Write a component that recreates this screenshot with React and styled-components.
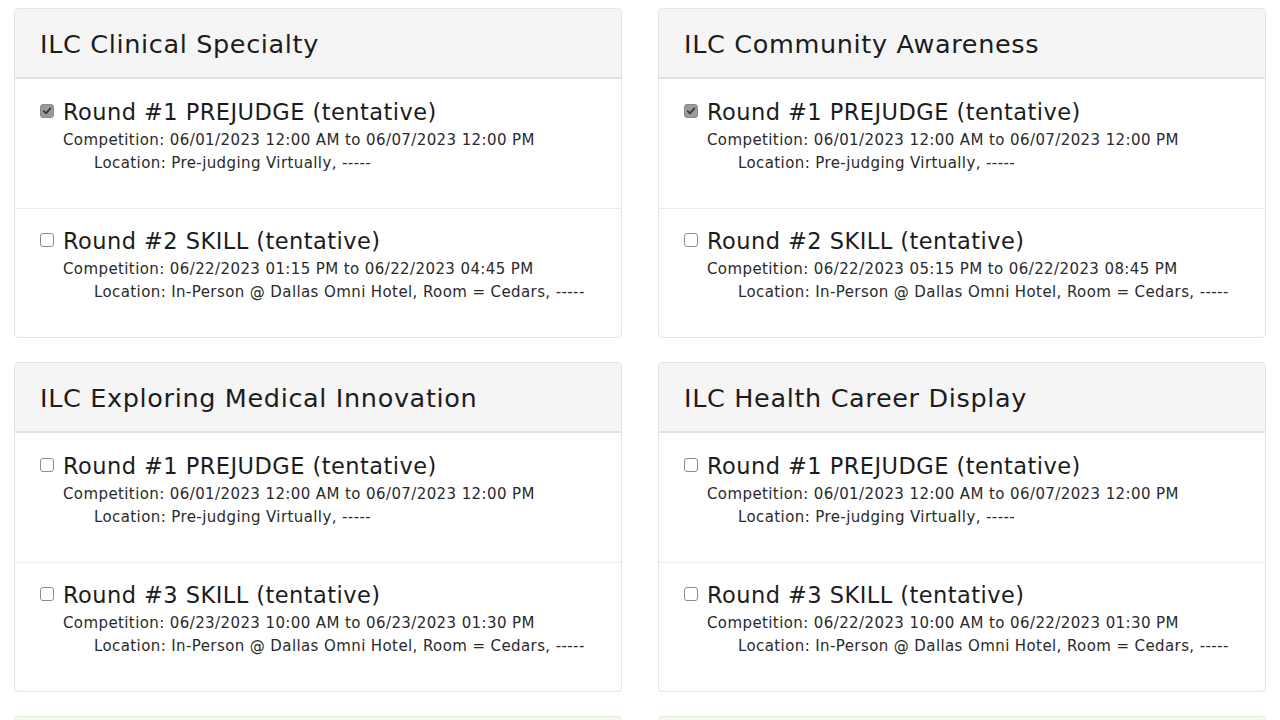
import React from "react";
import styled, { createGlobalStyle } from "styled-components";

const GlobalStyle = createGlobalStyle`
  html, body {
    margin: 0;
    padding: 0;
    background: #fff;
    overflow: hidden;
  }
  body {
    font-family: "DejaVu Sans", Verdana, sans-serif;
    color: #222;
  }
`;

const events = [
  {
    title: "ILC Clinical Specialty",
    rounds: [
      {
        name: "Round #1 PREJUDGE (tentative)",
        checked: true,
        competition: "06/01/2023 12:00 AM to 06/07/2023 12:00 PM",
        location: "Pre-judging Virtually, -----",
      },
      {
        name: "Round #2 SKILL (tentative)",
        competition: "06/22/2023 01:15 PM to 06/22/2023 04:45 PM",
        location: "In-Person @ Dallas Omni Hotel, Room = Cedars, -----",
      },
    ],
  },
  {
    title: "ILC Community Awareness",
    rounds: [
      {
        name: "Round #1 PREJUDGE (tentative)",
        checked: true,
        competition: "06/01/2023 12:00 AM to 06/07/2023 12:00 PM",
        location: "Pre-judging Virtually, -----",
      },
      {
        name: "Round #2 SKILL (tentative)",
        competition: "06/22/2023 05:15 PM to 06/22/2023 08:45 PM",
        location: "In-Person @ Dallas Omni Hotel, Room = Cedars, -----",
      },
    ],
  },
  {
    title: "ILC Exploring Medical Innovation",
    rounds: [
      {
        name: "Round #1 PREJUDGE (tentative)",
        competition: "06/01/2023 12:00 AM to 06/07/2023 12:00 PM",
        location: "Pre-judging Virtually, -----",
      },
      {
        name: "Round #3 SKILL (tentative)",
        competition: "06/23/2023 10:00 AM to 06/23/2023 01:30 PM",
        location: "In-Person @ Dallas Omni Hotel, Room = Cedars, -----",
      },
    ],
  },
  {
    title: "ILC Health Career Display",
    rounds: [
      {
        name: "Round #1 PREJUDGE (tentative)",
        competition: "06/01/2023 12:00 AM to 06/07/2023 12:00 PM",
        location: "Pre-judging Virtually, -----",
      },
      {
        name: "Round #3 SKILL (tentative)",
        competition: "06/22/2023 10:00 AM to 06/22/2023 01:30 PM",
        location: "In-Person @ Dallas Omni Hotel, Room = Cedars, -----",
      },
    ],
  },
];

function CheckBox({ checked }) {
  return (
    <Box $checked={checked}>
      {checked && (
        <svg width="10" height="10" viewBox="0 0 10 10">
          <path
            d="M1.8 5.2 L4 7.4 L8.3 2.4"
            fill="none"
            stroke="#3a3a3a"
            strokeWidth="1.8"
            strokeLinecap="round"
            strokeLinejoin="round"
          />
        </svg>
      )}
    </Box>
  );
}

function EventPanel({ event }) {
  return (
    <Panel>
      <PanelHeader>
        <PanelTitle>{event.title}</PanelTitle>
      </PanelHeader>
      {event.rounds.map((r) => (
        <RoundRow key={r.name}>
          <RoundTitle>
            <CheckBox checked={r.checked} />
            {r.name}
          </RoundTitle>
          <Detail>Competition: {r.competition}</Detail>
          <Detail $indent>Location: {r.location}</Detail>
        </RoundRow>
      ))}
    </Panel>
  );
}

export default function App() {
  return (
    <>
      <GlobalStyle />
      <Page>
        {events.map((e) => (
          <EventPanel key={e.title} event={e} />
        ))}
        <Panel $success>
          <PanelHeader $success />
        </Panel>
        <Panel $success>
          <PanelHeader $success />
        </Panel>
      </Page>
    </>
  );
}

const Page = styled.div`
  display: grid;
  grid-template-columns: 608px 608px;
  column-gap: 36px;
  row-gap: 24px;
  padding: 8px 14px 0;
`;

const Panel = styled.div`
  border: 1px solid ${(p) => (p.$success ? "#e2eedd" : "#e4e4e4")};
  border-radius: 4px;
  background: #fff;
  overflow: hidden;
`;

const PanelHeader = styled.div`
  height: 70px;
  box-sizing: border-box;
  display: flex;
  align-items: center;
  padding: 1px 25px 0;
  background: ${(p) => (p.$success ? "#f0f9ec" : "#f5f5f5")};
  border-bottom: 2px solid #e2e2e2;
`;

const PanelTitle = styled.h3`
  margin: 0;
  font-weight: normal;
  font-size: 25.5px;
  color: #1c1c1c;
  letter-spacing: 0.65px;
`;

const RoundRow = styled.div`
  height: 129px;
  box-sizing: border-box;
  padding: 17px 25px 0;
  & + & {
    padding-top: 16px;
    border-top: 1px solid #ececec;
  }
`;

const RoundTitle = styled.div`
  display: flex;
  align-items: center;
  gap: 9px;
  font-size: 22.5px;
  line-height: 32px;
  letter-spacing: 0.45px;
  color: #1c1c1c;
  margin-bottom: 1px;
`;

const Box = styled.span`
  width: 14px;
  height: 14px;
  box-sizing: border-box;
  flex: none;
  display: inline-flex;
  align-items: center;
  justify-content: center;
  border-radius: 3px;
  border: 1px solid ${(p) => (p.$checked ? "#8a8a8a" : "#8c8c8c")};
  background: ${(p) => (p.$checked ? "#9a9a9a" : "#fff")};
  margin-top: -3px;
`;

const Detail = styled.div`
  font-size: 15px;
  line-height: 23px;
  letter-spacing: 0.4px;
  color: #2a2a2a;
  padding-left: ${(p) => (p.$indent ? "54px" : "23px")};
`;
